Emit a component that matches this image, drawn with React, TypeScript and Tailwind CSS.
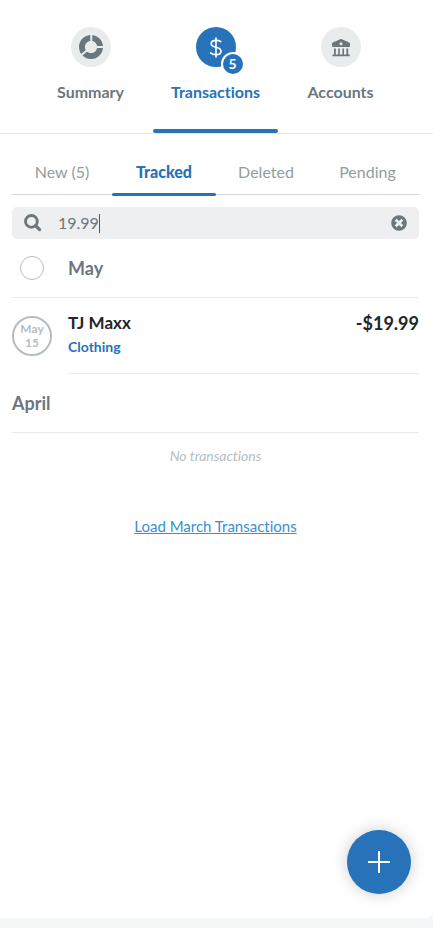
import { useState } from 'react';
import clsx from 'clsx';

const DonutIcon = () => (
  <svg width="26" height="26" viewBox="0 0 26 26" fill="none" aria-hidden="true">
    <circle cx="13" cy="13" r="9" stroke="#6b777d" strokeWidth="6" />
    <path d="M13.3 13V0M13 13H26M13 13L3.5 21" stroke="#e8ecec" strokeWidth="2" />
    <circle cx="13" cy="13" r="6" fill="#e8ecec" />
  </svg>
);

const DollarIcon = () => (
  <svg width="14" height="22" viewBox="0 0 14 22" fill="none" stroke="#fff" strokeWidth="1.6" strokeLinecap="round" aria-hidden="true">
    <path d="M7 2V21" />
    <path d="M11.8 5.7C10.6 4.8 9 4.4 7 4.4C4 4.4 2.2 5.7 2.2 7.7C2.2 9.9 4.2 10.6 7 11.3C10.1 12 12 13 12 15.2C12 17.4 10 18.6 7 18.6C4.8 18.6 3 18 1.6 16.9" />
  </svg>
);

const BankIcon = () => (
  <svg width="20" height="20" viewBox="0 0 20 20" fill="#6b777d" aria-hidden="true">
    <path d="M9.2 2.3Q10 1.9 10.8 2.3L18.2 5.6Q19 6 19 6.8V9Q19 10 18 10H2Q1 10 1 9V6.8Q1 6 1.8 5.6Z" />
    <circle cx="10" cy="6.8" r="1.5" fill="#e8ecec" />
    <path d="M3 11.6H4.8V17.5H3ZM7.2 11.6H8.8V17.5H7.2ZM11.4 11.6H13V17.5H11.4ZM15.4 11.6H17.2V17.5H15.4ZM1.5 17.5H18.7V19.3H1.5Z" />
  </svg>
);

const SearchIcon = () => (
  <svg width="18" height="18" viewBox="0 0 18 18" fill="none" stroke="#6b777d" aria-hidden="true">
    <circle cx="7.4" cy="7.4" r="5.9" strokeWidth="2.8" />
    <path d="M11.8 11.8L15.6 15.6" strokeWidth="3.2" strokeLinecap="round" />
  </svg>
);

const ClearIcon = () => (
  <svg width="16" height="16" viewBox="0 0 16 16" fill="none" aria-hidden="true">
    <circle cx="8" cy="8" r="7.8" fill="#6b777d" />
    <path d="M5.7 5.7L10.3 10.3M10.3 5.7L5.7 10.3" stroke="#eeeff1" strokeWidth="2.8" strokeLinecap="square" />
  </svg>
);

const sections = [
  { label: 'Summary', icon: <DonutIcon />, badge: 0 },
  { label: 'Transactions', icon: <DollarIcon />, badge: 5 },
  { label: 'Accounts', icon: <BankIcon />, badge: 0 },
];

const filters = ['New (5)', 'Tracked', 'Deleted', 'Pending'];

export default function App() {
  const [section, setSection] = useState('Transactions');
  const [filter, setFilter] = useState('Tracked');
  const [query, setQuery] = useState('19.99');

  return (
    <div className="flex min-h-screen flex-col bg-[#f4f6f8] pb-[10px] font-['Lato','Open_Sans',sans-serif] text-[#6b777d] [font-variant-ligatures:none]">
      <div className="flex-1 rounded-br-md bg-white">
        <nav className="flex border-b border-[#e6e9e9] pr-[30px] pl-7">
          {sections.map(({ label, icon, badge }) => (
            <button
              key={label}
              onClick={() => setSection(label)}
              className={clsx(
                'relative flex h-[133px] flex-1 flex-col items-center pt-[27px] text-base font-bold',
                section === label && 'text-[#2772b8]'
              )}
            >
              <span
                className={clsx(
                  'relative flex size-10 items-center justify-center rounded-full',
                  section === label ? 'bg-[#2772b8]' : 'bg-[#e8ecec]'
                )}
              >
                {icon}
                {badge > 0 && (
                  <span className="absolute -right-[9px] -bottom-[9px] flex size-6 items-center justify-center rounded-full border-2 border-white bg-[#2772b8] text-sm text-white">
                    {badge}
                  </span>
                )}
              </span>
              <span className="mt-[13px]">{label}</span>
              {section === label && (
                <span className="absolute inset-x-0 bottom-0 h-1 rounded-full bg-[#2772b8]" />
              )}
            </button>
          ))}
        </nav>

        <main className="pr-3.5 pl-3">
          <div className="grid grid-cols-[100fr_104fr_100fr_103fr] border-b border-[#d3d8da]">
            {filters.map((name) => (
              <button
                key={name}
                onClick={() => setFilter(name)}
                className={clsx(
                  'relative h-[60px] pt-4 text-base',
                  filter === name ? 'font-black text-[#2772b8]' : 'text-[#929da1]'
                )}
              >
                {name}
                {filter === name && (
                  <span className="absolute inset-x-0 -bottom-0.5 h-[3px] rounded-full bg-[#2772b8]" />
                )}
              </button>
            ))}
          </div>

          <div className="mt-3 flex h-8 items-center rounded-[5px] bg-[#eeeff1] px-3">
            <SearchIcon />
            <input
              type="text"
              aria-label="Search transactions"
              value={query}
              onChange={(e) => setQuery(e.target.value)}
              className="ml-4 field-sizing-content text-base leading-6 caret-transparent outline-none"
            />
            <span className="h-[19px] w-px bg-[#4d585e]" />
            <button aria-label="Clear search" onClick={() => setQuery('')} className="ml-auto">
              <ClearIcon />
            </button>
          </div>

          <section>
            <div className="flex h-[59px] items-center border-b border-[#e6eaea] pl-2">
              <input
                id="select-may"
                type="checkbox"
                className="size-6 appearance-none rounded-full border border-[#b4bdc1] checked:bg-[#2772b8]"
              />
              <label htmlFor="select-may" className="ml-6 text-lg font-bold">May</label>
            </div>
            <div className="flex">
              <div className="mt-[18px] flex size-10 shrink-0 flex-col items-center justify-center rounded-full border-2 border-[#b4bdc1] text-xs leading-[14px] font-bold text-[#b4bdc1]">
                <span>May</span>
                <span>15</span>
              </div>
              <div className="ml-4 flex h-[76px] flex-1 justify-between border-b border-[#e6eaea] pt-[11px]">
                <div>
                  <h3 className="text-[17px] leading-7 font-bold text-[#212629]">TJ Maxx</h3>
                  <p className="text-sm leading-5 font-bold text-[#2772b8]">Clothing</p>
                </div>
                <span className="text-lg leading-7 font-bold text-[#212629]">-$19.99</span>
              </div>
            </div>
          </section>

          <section>
            <h2 className="flex h-[59px] items-center border-b border-[#e6eaea] text-lg font-bold">April</h2>
            <p className="pt-[13px] text-center text-sm leading-5 text-[#b4bdc1] italic">No transactions</p>
          </section>

          <div className="mt-12 text-center">
            <a href="#march" className="text-[15px] leading-6 text-[#3490d8] underline">Load March Transactions</a>
          </div>
        </main>
      </div>

      <button
        aria-label="Add transaction"
        className="fixed right-[22px] bottom-[34px] flex size-16 items-center justify-center rounded-full bg-[#2772b8] shadow-[0_0_16px_rgba(0,0,0,0.2)]"
      >
        <svg width="22" height="22" viewBox="0 0 22 22" stroke="#fff" strokeWidth="2" aria-hidden="true">
          <path d="M11 0V22M0 11H22" />
        </svg>
      </button>
    </div>
  );
}
